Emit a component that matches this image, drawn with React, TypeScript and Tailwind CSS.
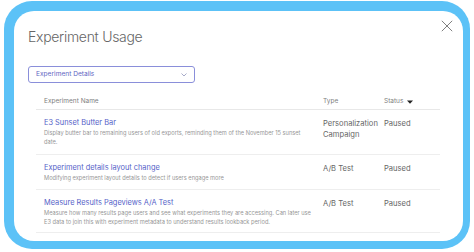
import React from "react";

const rows = [
  {
    title: "E3 Sunset Butter Bar",
    desc: "Display butter bar to remaining users of old exports, reminding them of the November 15 sunset date.",
    type: ["Personalization", "Campaign"],
    status: "Paused",
    pb: "pb-[8px]",
  },
  {
    title: "Experiment details layout change",
    desc: "Modifying experiment layout details to detect if users engage more",
    type: ["A/B Test"],
    status: "Paused",
    pb: "pb-[7px]",
  },
  {
    title: "Measure Results Pageviews A/A Test",
    desc: "Measure how many results page users and see what experiments they are accessing. Can later use E3 data to join this with experiment metadata to understand results lookback period.",
    type: ["A/B Test"],
    status: "Paused",
    pb: "pb-[6px]",
  },
];

export default function App() {
  return (
    <div className="w-[474px] h-[252px] bg-white pt-[1px] pl-[4px]" style={{ fontFamily: "Inter, 'Noto Sans', sans-serif" }}>
      <div className="w-[466px] h-[248px] rounded-[28px] bg-[#5cc2f7] pl-[10px] pt-[10px] pr-[7px] pb-[8px]">
        <div className="relative h-full rounded-[20px] bg-white pl-[14px] pt-[17px]">
          <button className="absolute right-[10px] top-[9px] w-[12px] h-[12px]">
            <svg width="12" height="12" viewBox="0 0 12 12" fill="none">
              <path d="M0.8 0.8L11.2 11.2M11.2 0.8L0.8 11.2" stroke="#707070" strokeWidth="0.9" />
            </svg>
          </button>
          <div className="text-[14px] leading-[18px] font-light tracking-[-0.3px] text-[#666]">Experiment Usage</div>
          <div className="mt-[20px] w-[167px] h-[17px] rounded-[3px] border border-[#8a8fda] flex items-center justify-between pl-[7px] pr-[7px]">
            <span className="text-[6.6px] text-[#5f65c2]">Experiment Details</span>
            <svg width="6" height="4" viewBox="0 0 6 4" fill="none">
              <path d="M0.5 0.5L3 3L5.5 0.5" stroke="#9095bb" strokeWidth="0.8" />
            </svg>
          </div>
          <div className="ml-[8px] w-[404px] mt-[14px]">
            <div className="flex border-b border-[#e8e8e8] pb-[3px] text-[6.5px] leading-[9px] text-[#808080]">
              <div className="w-[279px] pl-[8px]">Experiment Name</div>
              <div className="w-[61px] pl-[8px]">Type</div>
              <div className="flex-1 pl-[8px] flex items-center gap-[4px]">
                <span>Status</span>
                <svg width="6" height="4" viewBox="0 0 6 4">
                  <path d="M0 0.5H6L3 3.8Z" fill="#222" />
                </svg>
              </div>
            </div>
            {rows.map((r, i) => (
              <div key={i} className={`flex border-b border-[#eeeeee] pt-[8px] ${r.pb}`}>
                <div className="w-[279px] pl-[8px] pr-[4px]">
                  <div className="text-[7.4px] leading-[10px] text-[#5562c8]">{r.title}</div>
                  <div className="text-[5.7px] leading-[9px] text-[#979797]">{r.desc}</div>
                </div>
                <div className="w-[61px] pl-[8px] text-[7.6px] leading-[11px] text-[#666] -mt-[0.5px]">
                  {r.type.map((t, j) => (
                    <div key={j}>{t}</div>
                  ))}
                </div>
                <div className="flex-1 pl-[8px] text-[7.6px] leading-[11px] text-[#666] -mt-[0.5px]">{r.status}</div>
              </div>
            ))}
          </div>
        </div>
      </div>
    </div>
  );
}
